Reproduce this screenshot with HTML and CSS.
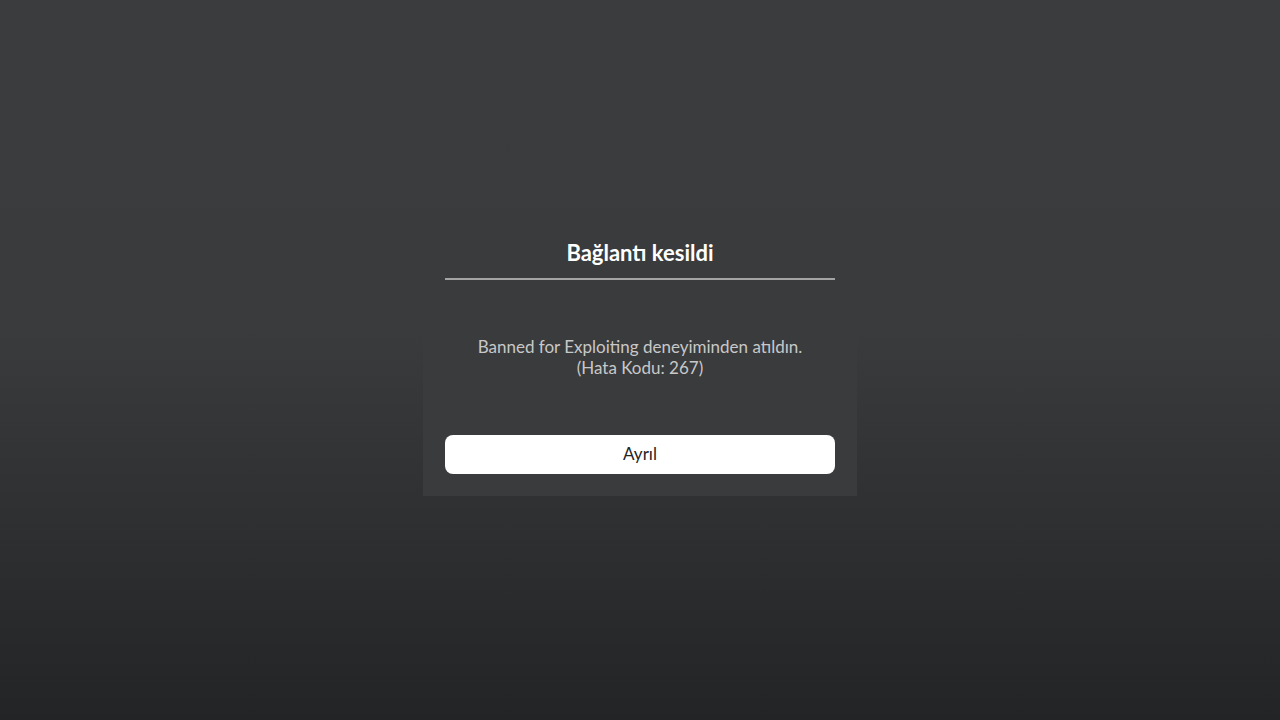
FILE: index.html
```html
<!DOCTYPE html>
<html lang="tr">
<head>
<meta charset="utf-8">
<title>Bağlantı kesildi</title>
<link rel="stylesheet" href="styles.css">
</head>
<body>
<div class="screen">
  <div class="dialog">
    <div class="title">Bağlantı kesildi</div>
    <div class="divider"></div>
    <div class="message">Banned for Exploiting deneyiminden atıldın.<br>(Hata Kodu: 267)</div>
    <div class="button">Ayrıl</div>
  </div>
</div>
</body>
</html>
```
FILE: styles.css
```css
html, body {
  margin: 0;
  padding: 0;
  width: 100%;
  height: 100%;
}
body {
  font-family: Lato, "Noto Sans", sans-serif;
  background: linear-gradient(to bottom, #3b3c3e 0px, #3a3b3d 330px, #232426 720px);
}
.screen {
  width: 1280px;
  height: 720px;
  display: flex;
  justify-content: center;
  align-items: flex-start;
}
.dialog {
  margin-top: 231px;
  width: 390px;
  padding: 0 22px 22px;
  background: #3a3b3d;
  display: flex;
  flex-direction: column;
  align-items: stretch;
}
.title {
  color: #ffffff;
  font-weight: 700;
  font-size: 22px;
  line-height: 43px;
  padding-bottom: 4px;
  text-align: center;
}
.divider {
  height: 2px;
  background: #a4a4a4;
}
.message {
  color: #c8c8c8;
  font-size: 17px;
  line-height: 21px;
  text-align: center;
  margin-top: 56px;
}
.button {
  margin-top: 57px;
  height: 38.5px;
  border-radius: 8px;
  background: #ffffff;
  color: #232527;
  font-size: 17px;
  line-height: 38.5px;
  text-align: center;
}
```
